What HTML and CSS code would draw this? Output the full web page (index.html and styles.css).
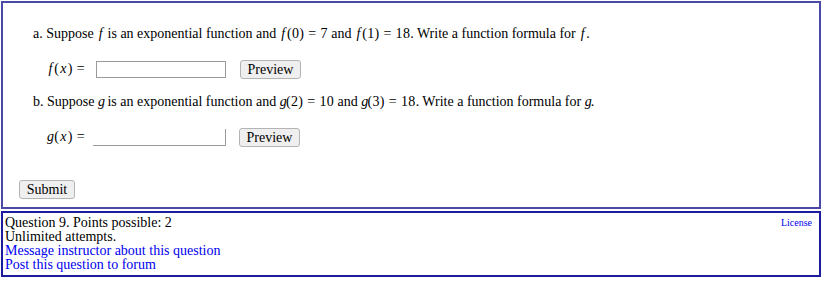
FILE: index.html
```html
<!DOCTYPE html>
<html>
<head>
<meta charset="utf-8">
<link rel="stylesheet" href="styles.css">
</head>
<body>
<div class="page">
  <div class="question">
    <p class="prompt">a. Suppose <i class="m f">f</i> is an exponential function and <span class="math"><i class="m f">f</i>(0)<span class="op">=</span>7</span> and <span class="math"><i class="m f">f</i>(1)<span class="op">=</span>18</span>. Write a function formula for <i class="m f">f</i>.</p>
    <div class="answer answer-a">
      <span class="label math"><i class="m f">f</i>(<i class="m x">x</i>)<span class="op">=</span></span>
      <input class="box" type="text">
      <button class="btn preview" type="button">Preview</button>
    </div>
    <p class="prompt">b. Suppose <i class="m g">g</i> is an exponential function and <span class="math"><i class="m g">g</i>(2)<span class="op">=</span>10</span> and <span class="math"><i class="m g">g</i>(3)<span class="op">=</span>18</span>. Write a function formula for <i class="m g">g</i>.</p>
    <div class="answer answer-b">
      <span class="label math"><i class="m">g</i>(<i class="m x">x</i>)<span class="op">=</span></span>
      <input class="box line" type="text">
      <button class="btn preview" type="button">Preview</button>
    </div>
    <div class="actions">
      <button class="btn submit" type="button">Submit</button>
    </div>
  </div>
  <div class="info">
    <div class="info-text">
      <div>Question 9. Points possible: 2</div>
      <div>Unlimited attempts.</div>
      <a href="#">Message instructor about this question</a>
      <a href="#">Post this question to forum</a>
    </div>
    <a class="license" href="#">License</a>
  </div>
</div>
</body>
</html>
```
FILE: styles.css
```css
html, body {
  margin: 0;
  padding: 0;
  background: #fff;
}
body {
  font-family: "Liberation Serif", "Times New Roman", serif;
  color: #000;
}
.page {
  padding: 1px 3px 0 1px;
  display: flex;
  flex-direction: column;
  gap: 2px;
}
.question {
  border: 2px solid #4a4aa6;
  padding: 22px 0 8px 30px;
  font-size: 14px;
}
.prompt {
  margin: 0;
  line-height: 18px;
  height: 18px;
}
.math {
  letter-spacing: 0.3px;
}
.m {
  font-style: italic;
}
.m.f {
  padding: 0 1.5px;
}
.m.g {
  margin-right: -1px;
}
.m.x {
  padding: 0 1px;
}
.op {
  margin: 0 4px;
}
.answer {
  display: flex;
  align-items: center;
  height: 20px;
  margin-left: 14px;
}
.answer-a {
  margin-top: 16px;
  margin-bottom: 14px;
}
.answer-b {
  margin-top: 16px;
}
.label {
  width: 48px;
  white-space: nowrap;
}
.box {
  width: 130px;
  height: 17px;
  box-sizing: border-box;
  border: 1px solid #9a9a9a;
  margin: 0 14px 0 1px;
  padding: 0;
  font: inherit;
}
.box.line {
  border-top: none;
  border-left: none;
  margin-left: -2px;
  width: 133px;
  margin-right: 13px;
}
.btn {
  font-family: "Liberation Serif", "Times New Roman", serif;
  font-size: 14px;
  background: #efefef;
  border: 1px solid #b4b4b4;
  border-radius: 3px;
  padding: 0 6px;
  height: 19px;
  line-height: 17px;
  color: #000;
}
.preview {
  width: 61px;
}
.actions {
  margin: 33px 0 0 -14px;
}
.submit {
  width: 56px;
  height: 19px;
  padding: 0;
}
.info {
  border: 2px solid #1c1c9c;
  display: flex;
  justify-content: space-between;
  padding: 3px 7px 3px 2px;
  font-size: 14px;
  line-height: 14px;
}
.info-text {
  display: flex;
  flex-direction: column;
}
.info a {
  color: #0000ee;
  text-decoration: none;
}
.info .license {
  font-size: 10px;
  line-height: 12px;
  margin-top: 1px;
}
```
